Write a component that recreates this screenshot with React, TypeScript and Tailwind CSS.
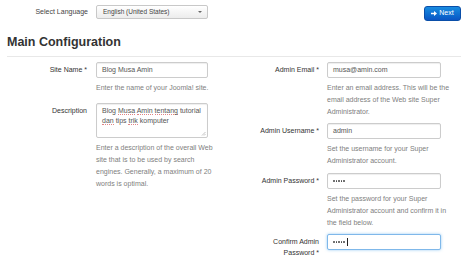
import React from "react";

const font = { fontFamily: '"Liberation Sans", Arial, sans-serif' };

function Field({
  value,
  width = "w-[114px]",
  focused = false,
}: {
  value: React.ReactNode;
  width?: string;
  focused?: boolean;
}) {
  return (
    <div
      className={[
        "h-[16px] rounded-[2px] border bg-white px-[5px] text-[7px] leading-[14px] text-[#555]",
        width,
        focused
          ? "border-[#7fb8ea] shadow-[0_0_3px_rgba(82,168,236,0.6)]"
          : "border-[#ccc] shadow-[inset_0_1px_1px_rgba(0,0,0,0.07)]",
      ].join(" ")}
    >
      {value}
    </div>
  );
}

function Help({ lines }: { lines: string[] }) {
  return (
    <div className="mt-[4px] whitespace-nowrap text-[7px] leading-[12px] text-[#808080]">
      {lines.map((l, i) => (
        <div key={i}>{l}</div>
      ))}
    </div>
  );
}

function Dots({ cursor = false }: { cursor?: boolean }) {
  return (
    <span className="inline-flex items-center gap-[1px] align-middle">
      {[0, 1, 2, 3, 4].map((i) => (
        <span key={i} className="h-[1.5px] w-[1.5px] rounded-full bg-[#444]" />
      ))}
      {cursor && <span className="ml-[1px] h-[8px] w-[1px] bg-[#222]" />}
    </span>
  );
}

// spell-check marks, kept thin
const Squig = ({ children }: { children: React.ReactNode }) => (
  <span className="border-b border-dotted border-[#e08585]">{children}</span>
);

export default function App() {
  return (
    <div
      className="h-[261px] w-[474px] overflow-hidden bg-white pl-[7px] pr-[13px] text-[#333]"
      style={font}
    >
      {/* Top bar */}
      <div className="flex items-start justify-between">
        <div className="mt-[5px] flex items-center gap-[8px]">
          <div className="w-[81px] text-right text-[7px] leading-[14px] text-[#444]">
            Select Language
          </div>
          <div className="relative h-[14px] w-[112px] rounded-[2px] border border-[#c8c8c8] bg-gradient-to-b from-white to-[#ececec] pl-[6px] text-[6.5px] leading-[12px] text-[#444]">
            English (United States)
            <span className="absolute right-[5px] top-[5px] h-0 w-0 border-x-[2px] border-t-[2px] border-x-transparent border-t-[#666]" />
          </div>
        </div>
        <button className="mt-[6px] flex h-[15px] w-[37px] items-center justify-center gap-[2px] rounded-[3px] border border-[#0a4ea8] bg-gradient-to-b from-[#1a8ce0] to-[#0b55c4] text-[7px] text-white">
          <svg width="6" height="5" viewBox="0 0 12 10" className="fill-white">
            <path d="M0 3.5h6V0l6 5-6 5V6.5H0z" />
          </svg>
          Next
        </button>
      </div>

      {/* Heading */}
      <h2 className="mt-[14px] border-b border-[#e8e8e8] pb-[6px] text-[12.5px] font-bold leading-[15px] text-[#333]">
        Main Configuration
      </h2>

      {/* Form */}
      <div className="grid grid-cols-[230px_1fr] pt-[5px]">
        {/* Left column */}
        <div className="flex flex-col">
          <div className="mb-[9px] flex gap-[9px]">
            <div className="w-[80px] pt-[1px] text-right text-[7px] leading-[14px]">
              Site Name *
            </div>
            <div>
              <Field value="Blog Musa Amin" width="w-[112px]" />
              <Help lines={["Enter the name of your Joomla! site."]} />
            </div>
          </div>
          <div className="flex gap-[9px]">
            <div className="w-[80px] pt-[1px] text-right text-[7px] leading-[14px]">
              Description
            </div>
            <div>
              <div className="relative h-[35px] w-[112px] rounded-[2px] border border-[#ccc] bg-white px-[5px] pt-[2px] text-[7px] leading-[10px] text-[#555] shadow-[inset_0_1px_1px_rgba(0,0,0,0.07)]">
                Blog <Squig>Musa</Squig> <Squig>Amin</Squig> <Squig>tentang</Squig>{" "}
                tutorial
                <br />
                <Squig>dan</Squig> tips <Squig>trik</Squig> komputer
                <svg
                  width="5"
                  height="5"
                  viewBox="0 0 5 5"
                  className="absolute bottom-[1px] right-[1px] stroke-[#aaa]"
                >
                  <path d="M1 4.5L4.5 1M3 4.5L4.5 3" strokeWidth="0.7" />
                </svg>
              </div>
              <Help
                lines={[
                  "Enter a description of the overall Web",
                  "site that is to be used by search",
                  "engines. Generally, a maximum of 20",
                  "words is optimal.",
                ]}
              />
            </div>
          </div>
        </div>

        {/* Right column */}
        <div className="flex flex-col">
          <div className="mb-[5px] flex gap-[8px]">
            <div className="w-[82px] pt-[1px] text-right text-[7px] leading-[14px]">
              Admin Email *
            </div>
            <div>
              <Field value="musa@amin.com" />
              <Help
                lines={[
                  "Enter an email address. This will be the",
                  "email address of the Web site Super",
                  "Administrator.",
                ]}
              />
            </div>
          </div>
          <div className="mb-[6px] flex gap-[8px]">
            <div className="w-[82px] pt-[1px] text-right text-[7px] leading-[14px]">
              Admin Username *
            </div>
            <div>
              <Field value="admin" />
              <Help
                lines={[
                  "Set the username for your Super",
                  "Administrator account.",
                ]}
              />
            </div>
          </div>
          <div className="mb-[5px] flex gap-[8px]">
            <div className="w-[82px] pt-[1px] text-right text-[7px] leading-[14px]">
              Admin Password *
            </div>
            <div>
              <Field value={<Dots />} />
              <Help
                lines={[
                  "Set the password for your Super",
                  "Administrator account and confirm it in",
                  "the field below.",
                ]}
              />
            </div>
          </div>
          <div className="flex gap-[8px]">
            <div className="w-[82px] pt-[2px] text-right text-[7px] leading-[11px]">
              Confirm Admin
              <br />
              Password *
            </div>
            <div>
              <Field value={<Dots cursor />} focused />
            </div>
          </div>
        </div>
      </div>
    </div>
  );
}
